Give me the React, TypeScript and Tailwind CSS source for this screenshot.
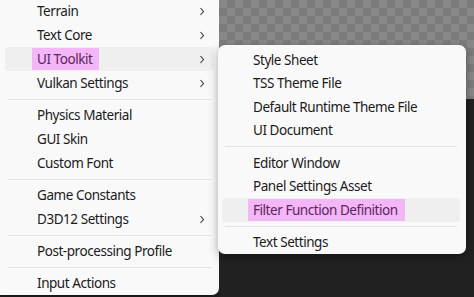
import { Fragment } from "react";

interface MenuItem {
  label: string;
  sub?: boolean;
  active?: boolean;
}

const mainGroups: MenuItem[][] = [
  [
    { label: "Terrain", sub: true },
    { label: "Text Core", sub: true },
    { label: "UI Toolkit", sub: true, active: true },
    { label: "Vulkan Settings", sub: true },
  ],
  [{ label: "Physics Material" }, { label: "GUI Skin" }, { label: "Custom Font" }],
  [{ label: "Game Constants" }, { label: "D3D12 Settings", sub: true }],
  [{ label: "Post-processing Profile" }],
  [{ label: "Input Actions" }],
];

const subGroups: MenuItem[][] = [
  [
    { label: "Style Sheet" },
    { label: "TSS Theme File" },
    { label: "Default Runtime Theme File" },
    { label: "UI Document" },
  ],
  [
    { label: "Editor Window" },
    { label: "Panel Settings Asset" },
    { label: "Filter Function Definition", active: true },
  ],
  [{ label: "Text Settings" }],
];

const Chevron = () => (
  <svg width="6" height="9" viewBox="0 0 6 9" className="shrink-0">
    <polyline points="1.5,1 4.5,4.5 1.5,8" fill="none" stroke="#3a3a3a" strokeWidth="1.1" />
  </svg>
);

const Label = ({ item }: { item: MenuItem }) =>
  item.active ? (
    <span className="-ml-[5px] pl-[5px] pr-[7px] h-[22px] inline-flex items-center bg-[#f3b6f6] text-[#5b2560]">
      {item.label}
    </span>
  ) : (
    <span>{item.label}</span>
  );

const App = () => {
  return (
    <div
      className="relative w-[474px] h-[297px] overflow-hidden bg-[#212121] flex text-[13.5px] tracking-[-0.45px] text-[#1b1b1b]"
      style={{ fontFamily: '"Noto Sans", "Open Sans", sans-serif' }}
    >
      {/* Main context menu */}
      <div className="w-[219px] self-start bg-[#f9f9f9] rounded-br-[7px] shadow-[0_2px_6px_rgba(0,0,0,0.35)] px-[5px] -mt-px">
        {mainGroups.map((group, gi) => (
          <Fragment key={gi}>
            {gi > 0 && (
              <div className="h-2 flex items-center px-[3px]">
                <div className="h-px w-full bg-[#e3e3e3]" />
              </div>
            )}
            {group.map((item) => (
              <div
                key={item.label}
                className={`h-6 flex items-center justify-between pl-[32px] pr-[9px] rounded-[4px] ${
                  item.active ? "bg-[#efefef]" : ""
                }`}
              >
                <Label item={item} />
                {item.sub && <Chevron />}
              </div>
            ))}
          </Fragment>
        ))}
      </div>

      {/* Scene view backdrop */}
      <div className="flex-1 flex flex-col">
        <div className="h-[99px] bg-[conic-gradient(#7c7c7c_25%,#888888_0_50%,#7c7c7c_0_75%,#888888_0)] bg-[length:16px_16px]" />
        <div className="flex-1 bg-[#212121]" />
      </div>

      {/* UI Toolkit submenu */}
      <div className="absolute left-[218px] top-[45px] w-[248px] bg-[#f9f9f9] rounded-[7px] shadow-[0_3px_10px_rgba(0,0,0,0.35)] pt-[3px] pl-[4px] pr-[6px]">
        {subGroups.map((group, gi) => (
          <Fragment key={gi}>
            {gi > 0 && (
              <div className="h-[9px] flex items-center px-[3px]">
                <div className="h-px w-full bg-[#e3e3e3]" />
              </div>
            )}
            {group.map((item) => (
              <div
                key={item.label}
                className={`h-[23.5px] flex items-center pl-[31px] rounded-[4px] ${
                  item.active ? "bg-[#efefef]" : ""
                }`}
              >
                <Label item={item} />
              </div>
            ))}
          </Fragment>
        ))}
      </div>
    </div>
  );
};

export default App;
